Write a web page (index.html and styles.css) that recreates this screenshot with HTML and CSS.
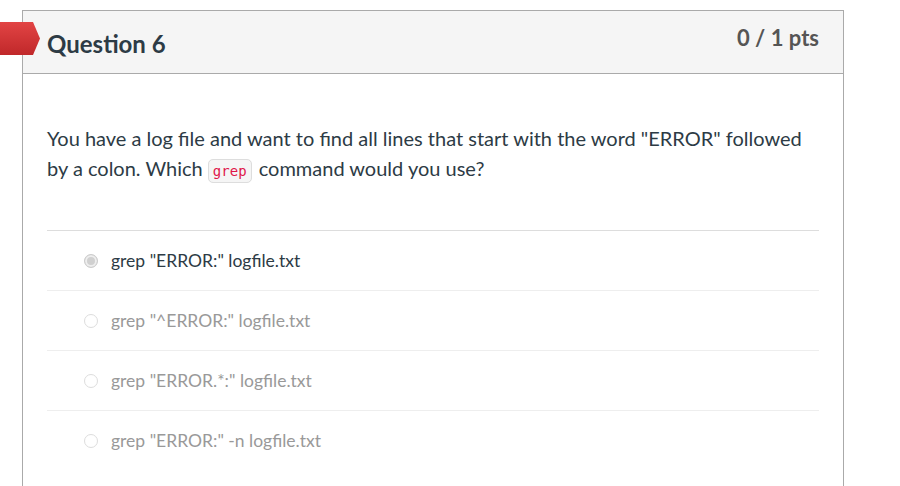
FILE: index.html
```html
<!DOCTYPE html>
<html lang="en">
<head>
    <meta charset="UTF-8">
    <title>Question 6</title>
    <link rel="stylesheet" href="styles.css">
</head>
<body>
    <div class="question">
        <div class="question-header">
            <span class="flag"></span>
            <h2 class="question-title">Question 6</h2>
            <div class="points">0 / 1 pts</div>
        </div>
        <div class="question-body">
            <p class="question-text">You have a log file and want to find all lines that start with the word "ERROR" followed by a colon. Which <code>grep</code> command would you use?</p>
            <div class="answers">
                <div class="answer selected">
                    <span class="radio"></span>
                    <span class="answer-label">grep "ERROR:" logfile.txt</span>
                </div>
                <div class="answer">
                    <span class="radio"></span>
                    <span class="answer-label">grep "^ERROR:" logfile.txt</span>
                </div>
                <div class="answer">
                    <span class="radio"></span>
                    <span class="answer-label">grep "ERROR.*:" logfile.txt</span>
                </div>
                <div class="answer">
                    <span class="radio"></span>
                    <span class="answer-label">grep "ERROR:" -n logfile.txt</span>
                </div>
            </div>
        </div>
    </div>
</body>
</html>
```

FILE: styles.css
```css
body {
    margin: 0;
    padding: 10px 0 0 22px;
    font-family: Lato, "Open Sans", sans-serif;
    color: #2d3b45;
    background: #fff;
}
.question {
    width: 820px;
    border: 1px solid #aaa;
    border-bottom: none;
    height: 600px;
}
.question-header {
    position: relative;
    display: flex;
    justify-content: space-between;
    background: #f5f5f5;
    border-bottom: 1px solid #aaa;
    height: 62px;
    padding: 0 24px 0 24px;
}
.flag {
    position: absolute;
    left: -23px;
    top: 11px;
    width: 40px;
    height: 33px;
    background: linear-gradient(#e24444, #c0282a);
    clip-path: polygon(0 0, 33px 0, 40px 50%, 33px 100%, 0 100%);
}
.question-title {
    margin: 0;
    font-size: 24px;
    font-weight: 700;
    line-height: 66px;
    color: #2d3b45;
}
.points {
    font-size: 22px;
    font-weight: 700;
    color: #555;
    line-height: 54px;
}
.question-body {
    padding: 49px 24px 0 24px;
}
.question-text {
    margin: 0 0 47px 0;
    font-size: 20px;
    line-height: 30px;
}
code {
    font-family: "DejaVu Sans Mono", monospace;
    font-size: 14px;
    line-height: 1;
    color: #e0174a;
    background: #f5f5f5;
    border: 1px solid #ddd;
    border-radius: 5px;
    padding: 3px 4px;
    margin-right: 2px;
}
.answer {
    display: flex;
    align-items: center;
    height: 59px;
    border-top: 1px solid #eee;
    padding-left: 37px;
    font-size: 17.5px;
    color: #999;
}
.answer.selected {
    border-top-color: #ddd;
    color: #2d3b45;
}
.radio {
    box-sizing: border-box;
    width: 14px;
    height: 14px;
    border-radius: 50%;
    border: 1px solid #ddd;
    background: #fff;
    margin-right: 13px;
}
.answer.selected .radio {
    border: 1px solid #ccc;
    background: #d0d0d0;
    box-shadow: inset 0 0 0 2px #eee;
}
```
